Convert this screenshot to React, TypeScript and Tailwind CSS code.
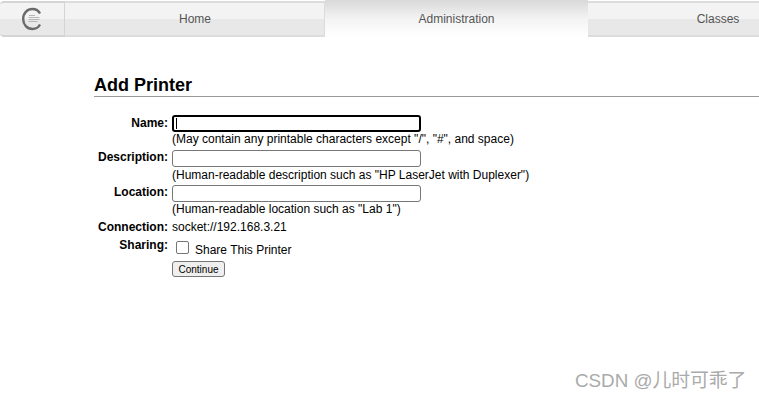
import React from 'react';

const sans = { fontFamily: '"Liberation Sans", Arial, sans-serif' };

function Logo() {
  return (
    <svg width="22" height="24" viewBox="0 0 22 24" fill="none">
      <path d="M19 6.5C17.5 3.5 15 2 11.5 2C6 2 2.2 6.2 2.2 12C2.2 17.8 6 22 11.5 22C15 22 17.5 20.5 19 17.5" stroke="#6a6a6a" strokeWidth="2.4" />
      <path d="M8 8.5h6M7.5 10.5h11M7.5 12.5h11M7.5 14.5h9" stroke="#b5b5b5" strokeWidth="1" />
    </svg>
  );
}

function NavTab({ label, active }: { label: string; active?: boolean }) {
  if (active) {
    return (
      <div className="flex h-[37px] w-[263px] shrink-0 items-center justify-center bg-gradient-to-b from-[#d9d9d9] via-[#f3f3f3] to-white pt-[1px] text-[12px] text-[#555]">
        {label}
      </div>
    );
  }
  return (
    <div className="mt-[1px] flex h-[36px] w-[260px] shrink-0 items-center justify-center border-b-2 border-r border-t-2 border-[#dcdcdc] bg-[linear-gradient(#f3f3f3_50%,#e8e8e8_50%)] pl-[1px] text-[12px] text-[#555]">
      {label}
    </div>
  );
}

function Row({ label, children, className = '' }: { label: string; children: React.ReactNode; className?: string }) {
  return (
    <div className={`flex ${className}`}>
      <div className="w-[74px] shrink-0 text-right font-bold leading-[14px]">{label}</div>
      <div className="ml-[4px] flex-1">{children}</div>
    </div>
  );
}

function TextField({ focused }: { focused?: boolean }) {
  return (
    <div
      className={`flex h-[17px] w-[249px] items-center rounded-[3px] bg-white pl-[2px] ${
        focused ? 'border-2 border-black' : 'border border-[#767676]'
      }`}
    >
      {focused && <span className="h-[11px] w-[1px] bg-black" />}
    </div>
  );
}

export default function App() {
  return (
    <div className="relative h-[401px] w-[759px] overflow-hidden bg-white text-[12px] text-black" style={sans}>
      <nav className="flex h-[37px] overflow-hidden">
        <div className="mt-[1px] flex h-[36px] w-[65px] shrink-0 items-center justify-center rounded-bl-[4px] rounded-tl-[4px] border-b-2 border-r border-t-2 border-[#d4d4d4] bg-[linear-gradient(#f3f3f3_50%,#e8e8e8_50%)]">
          <Logo />
        </div>
        <NavTab label="Home" />
        <NavTab label="Administration" active />
        <NavTab label="Classes" />
      </nav>

      <main className="pl-[94px]">
        <h2 className="mt-[38px] h-[22px] border-b border-[#999] text-[18px] font-bold leading-[20px]">Add Printer</h2>

        <div className="mt-[19px] flex flex-col">
          <Row label="Name:" className="h-[34px]">
            <div className="-mt-[1px]">
              <TextField focused />
            </div>
            <div className="leading-[14px]">(May contain any printable characters except "/", "#", and space)</div>
          </Row>
          <Row label="Description:" className="h-[35px]">
            <TextField />
            <div className="mt-[1px] leading-[14px]">(Human-readable description such as "HP LaserJet with Duplexer")</div>
          </Row>
          <Row label="Location:" className="h-[35px]">
            <TextField />
            <div className="leading-[14px]">(Human-readable location such as "Lab 1")</div>
          </Row>
          <Row label="Connection:" className="h-[18px]">
            <div className="leading-[14px]">socket://192.168.3.21</div>
          </Row>
          <Row label="Sharing:">
            <div className="flex h-[20px] items-center pl-[4px]">
              <span className="-mt-[2px] h-[13px] w-[13px] rounded-[2px] border border-[#767676] bg-white" />
              <span className="ml-[6px] mt-[3px]">Share This Printer</span>
            </div>
            <button className="mt-[3px] flex h-[16px] w-[53px] items-center justify-center rounded-[3px] border border-[#767676] bg-[#efefef] text-[10px] text-black">
              Continue
            </button>
          </Row>
        </div>
      </main>

      <div
        className="absolute left-[575px] top-[369px] text-[18.8px] leading-[23px] text-[#aaa]"
        style={{ fontFamily: '"Liberation Sans", "Noto Sans CJK SC", sans-serif' }}
      >
        CSDN @儿时可乖了
      </div>
    </div>
  );
}
